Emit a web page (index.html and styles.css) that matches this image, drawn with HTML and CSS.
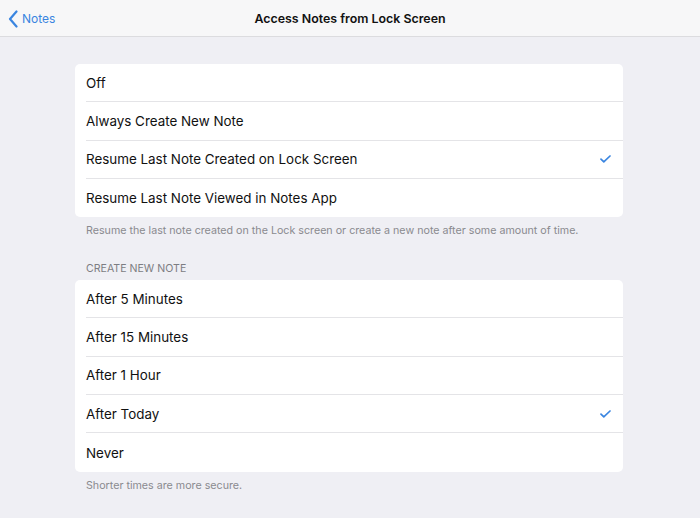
FILE: index.html
```html
<!DOCTYPE html>
<html>
<head>
<meta charset="utf-8">
<link rel="stylesheet" href="styles.css">
</head>
<body>
<header class="nav">
  <a class="back"><svg class="chev" width="10" height="18" viewBox="0 0 10 18"><path d="M8.5 1.5 L2 9 L8.5 16.5" fill="none" stroke="#3a85e0" stroke-width="2.2" stroke-linecap="round" stroke-linejoin="round"/></svg><span>Notes</span></a>
  <h1 class="title">Access Notes from Lock Screen</h1>
</header>
<main class="content">
  <section class="group first">
    <ul class="card">
      <li class="row"><span>Off</span></li>
      <li class="row"><span>Always Create New Note</span></li>
      <li class="row"><span>Resume Last Note Created on Lock Screen</span><svg class="check" width="11" height="8" viewBox="0 0 11 8"><path d="M1 4.2 L3.8 6.8 L10 1" fill="none" stroke="#3a85e0" stroke-width="1.7" stroke-linecap="round" stroke-linejoin="round"/></svg></li>
      <li class="row"><span>Resume Last Note Viewed in Notes App</span></li>
    </ul>
    <p class="foot">Resume the last note created on the Lock screen or create a new note after some amount of time.</p>
  </section>
  <section class="group">
    <h2 class="head">CREATE NEW NOTE</h2>
    <ul class="card">
      <li class="row"><span>After 5 Minutes</span></li>
      <li class="row"><span>After 15 Minutes</span></li>
      <li class="row"><span>After 1 Hour</span></li>
      <li class="row"><span>After Today</span><svg class="check" width="11" height="8" viewBox="0 0 11 8"><path d="M1 4.2 L3.8 6.8 L10 1" fill="none" stroke="#3a85e0" stroke-width="1.7" stroke-linecap="round" stroke-linejoin="round"/></svg></li>
      <li class="row"><span>Never</span></li>
    </ul>
    <p class="foot">Shorter times are more secure.</p>
  </section>
</main>
</body>
</html>
```
FILE: styles.css
```css
* { box-sizing: border-box; }
html, body { margin: 0; padding: 0; }
body {
  width: 700px;
  height: 518px;
  overflow: hidden;
  background: #efeff4;
  font-family: "Inter", "Liberation Sans", sans-serif;
  color: #000;
}
.nav {
  height: 37px;
  background: #f7f7f8;
  border-bottom: 1px solid #dcdcdf;
  display: flex;
  align-items: center;
  justify-content: center;
  position: relative;
}
.back {
  position: absolute;
  left: 8px;
  top: 0;
  height: 37px;
  display: flex;
  align-items: center;
  gap: 4px;
  color: #3a85e0;
  font-size: 12px;
}
.chev { display: block; }
.title {
  margin: 0;
  font-size: 12.4px;
  font-weight: 600;
  color: #111;
  padding-top: 1px;
}
.content {
  padding: 27px 77px 0 75px;
}
.card {
  list-style: none;
  margin: 0;
  padding: 0 0 0 11px;
  background: #fff;
  border-radius: 5px;
  width: 548px;
}
.row {
  height: 38.3px;
  display: flex;
  align-items: center;
  justify-content: space-between;
  padding-right: 11px;
  font-size: 13.4px;
  color: #111;
  border-bottom: 1px solid #e4e4e7;
}
.row:last-child { border-bottom: none; }
.check { display: block; margin-right: 1px; }
.foot {
  margin: 7px 0 0 11px;
  font-size: 10.7px;
  color: #8a8a8f;
  line-height: 13px;
}
.group.first { margin-bottom: 25px; }
.head {
  margin: 0 0 5px 11px;
  font-size: 10.6px;
  font-weight: 400;
  color: #7d7d82;
  line-height: 13px;
}
```
